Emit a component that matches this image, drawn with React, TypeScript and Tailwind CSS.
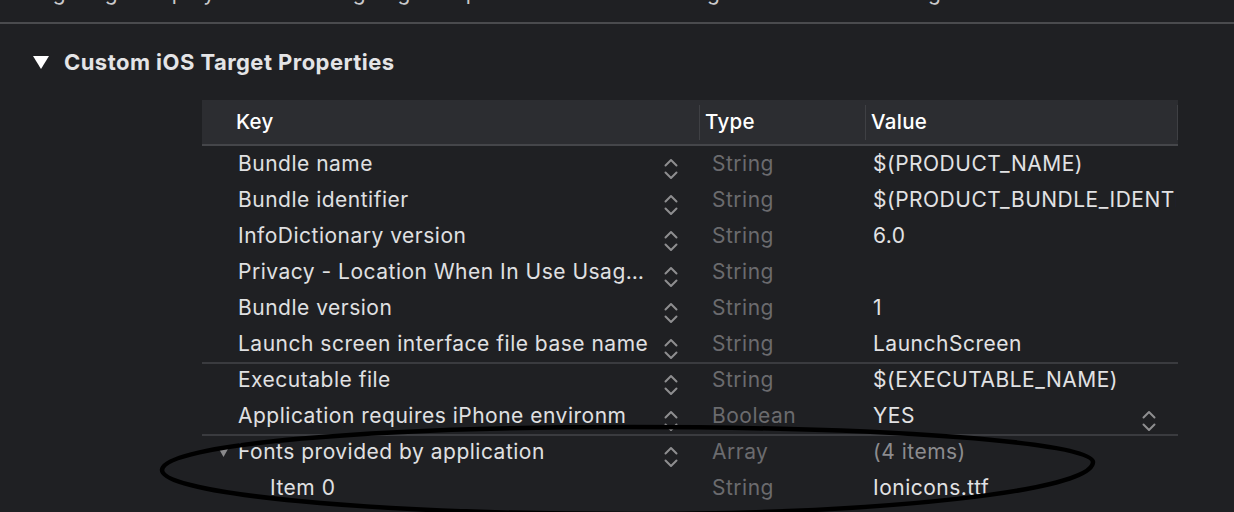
import React from "react";

const Stepper = () => (
  <svg width="14" height="22" viewBox="0 0 14 22" className="shrink-0">
    <polyline points="1.5,7.5 7,2 12.5,7.5" fill="none" stroke="#8e8e90" strokeWidth="2" strokeLinecap="round" strokeLinejoin="round" />
    <polyline points="1.5,14.5 7,20 12.5,14.5" fill="none" stroke="#8e8e90" strokeWidth="2" strokeLinecap="round" strokeLinejoin="round" />
  </svg>
);

type Row = {
  key: string;
  type: string;
  value: string;
  stepper?: boolean;
  valueGray?: boolean;
  valueStepper?: boolean;
  border?: boolean;
  expand?: boolean;
  indent?: boolean;
};

const rows: Row[] = [
  { key: "Bundle name", type: "String", value: "$(PRODUCT_NAME)", stepper: true },
  { key: "Bundle identifier", type: "String", value: "$(PRODUCT_BUNDLE_IDENTIFIER)", stepper: true },
  { key: "InfoDictionary version", type: "String", value: "6.0", stepper: true },
  { key: "Privacy - Location When In Use Usag…", type: "String", value: "", stepper: true },
  { key: "Bundle version", type: "String", value: "1", stepper: true },
  { key: "Launch screen interface file base name", type: "String", value: "LaunchScreen", stepper: true },
  { key: "Executable file", type: "String", value: "$(EXECUTABLE_NAME)", stepper: true, border: true },
  { key: "Application requires iPhone environm", type: "Boolean", value: "YES", stepper: true, valueStepper: true },
  { key: "Fonts provided by application", type: "Array", value: "(4 items)", stepper: true, valueGray: true, border: true, expand: true },
  { key: "Item 0", type: "String", value: "Ionicons.ttf", indent: true },
];

export default function App() {
  return (
    <div className="relative w-[1234px] h-[512px] overflow-hidden bg-[#1f2023] font-['Inter','Liberation_Sans',sans-serif]">
      {/* clipped previous line */}
      <div className="h-[22px] overflow-hidden">
        <div className="-mt-[19px] pl-[20px] text-[21px] leading-[24px] tracking-[0.5px] text-[#c9c9cb] whitespace-nowrap">
          Targeting a Deployment Info · Signing &amp; Capabilities · Resource Tags · Info · Build Settings · Build Phases · Build Rules
        </div>
      </div>
      <div className="h-[2px] bg-[#4a4b4e]" />

      {/* section title */}
      <div className="flex h-[76px] items-center pl-[33px]">
        <svg width="16" height="13" viewBox="0 0 16 13" className="mr-[15px]">
          <polygon points="0,0 16,0 8,13" fill="#ffffff" />
        </svg>
        <span className="text-[22px] font-bold text-[#e4e4e6] tracking-[0.45px]">Custom iOS Target Properties</span>
      </div>

      {/* table */}
      <div className="ml-[202px] w-[976px]">
        <div className="flex h-[46px] items-center border-b-2 border-[#45464a] bg-[#2c2d31] text-[20.5px] font-medium tracking-[0.3px] text-white">
          <div className="w-[497px] pl-[34px]">Key</div>
          <div className="h-[35px] w-px bg-[#3f4044]" />
          <div className="w-[165px] pl-[5px]">Type</div>
          <div className="h-[35px] w-px bg-[#3f4044]" />
          <div className="w-[311px] pl-[5px]">Value</div>
          <div className="h-[35px] w-px bg-[#3f4044]" />
        </div>

        {rows.map((r) => (
          <div
            key={r.key}
            className={`flex h-[36px] items-start text-[21px] leading-[36px] tracking-[0.5px] ${r.border ? "border-t-2 border-[#3a3b3f]" : ""}`}
          >
            <div className="relative flex w-[497px] items-start">
              {r.expand && (
                <svg width="9" height="8" viewBox="0 0 9 8" className="absolute left-[17px] top-[13px]">
                  <polygon points="0,0 9,0 4.5,8" fill="#8a8a8c" />
                </svg>
              )}
              <div
                className={`w-[462px] overflow-hidden whitespace-nowrap text-[#e0e0e2] ${r.indent ? "pl-[68px]" : "pl-[36px]"} ${r.border ? "-mt-[2px]" : ""}`}
              >
                {r.key}
              </div>
              {r.stepper && (
                <div className={r.border ? "mt-[10px]" : "mt-[12px]"}>
                  <Stepper />
                </div>
              )}
            </div>
            <div className={`w-[166px] pl-[13px] text-[#6b6b6e] ${r.border ? "-mt-[2px]" : ""}`}>{r.type}</div>
            <div className="relative flex w-[313px] items-start">
              <div
                className={`w-[311px] overflow-hidden whitespace-nowrap pl-[8px] ${r.valueGray ? "text-[#8c8c8f]" : "text-[#e2e2e4]"} ${r.border ? "-mt-[2px]" : ""}`}
              >
                {r.value}
              </div>
              {r.valueStepper && (
                <div className="absolute left-[277px] top-[12px]">
                  <Stepper />
                </div>
              )}
            </div>
          </div>
        ))}
      </div>

      {/* hand-drawn annotation ellipse */}
      <svg className="pointer-events-none absolute left-0 top-0" width="1234" height="512" viewBox="0 0 1234 512">
        <path
          d="M162,470 C164,444 371,427 628,427 C885,427 1093,442 1093,462 C1093,491 885,514 628,514 C371,514 162,494 162,470 Z"
          fill="none"
          stroke="#000"
          strokeWidth="4.5"
        />
      </svg>
    </div>
  );
}
